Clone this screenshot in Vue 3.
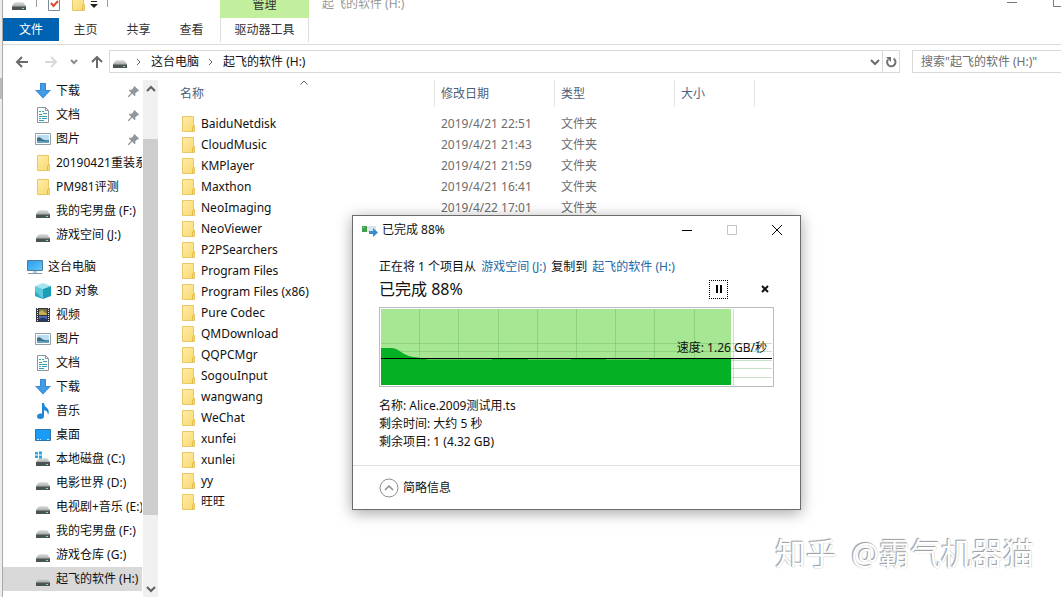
<script setup>
import { ref } from 'vue'

const quickAccess = [
  { icon: 'download', name: '下载', pinned: true },
  { icon: 'doc', name: '文档', pinned: true },
  { icon: 'picture', name: '图片', pinned: true },
  { icon: 'folder', name: '20190421重装系统' },
  { icon: 'folder', name: 'PM981评测' },
  { icon: 'drive', name: '我的宅男盘 (F:)' },
  { icon: 'drive', name: '游戏空间 (J:)' }
]
const thisPc = [
  { icon: 'cube', name: '3D 对象' },
  { icon: 'video', name: '视频' },
  { icon: 'picture', name: '图片' },
  { icon: 'doc', name: '文档' },
  { icon: 'download', name: '下载' },
  { icon: 'music', name: '音乐' },
  { icon: 'desktop', name: '桌面' },
  { icon: 'system', name: '本地磁盘 (C:)' },
  { icon: 'drive', name: '电影世界 (D:)' },
  { icon: 'drive', name: '电视剧+音乐 (E:)' },
  { icon: 'drive', name: '我的宅男盘 (F:)' },
  { icon: 'drive', name: '游戏仓库 (G:)' },
  { icon: 'drive', name: '起飞的软件 (H:)', current: true }
]
const files = [
  ['BaiduNetdisk', '2019/4/21 22:51'],
  ['CloudMusic', '2019/4/21 21:43'],
  ['KMPlayer', '2019/4/21 21:59'],
  ['Maxthon', '2019/4/21 16:41'],
  ['NeoImaging', '2019/4/22 17:01'],
  ['NeoViewer', ''],
  ['P2PSearchers', ''],
  ['Program Files', ''],
  ['Program Files (x86)', ''],
  ['Pure Codec', ''],
  ['QMDownload', ''],
  ['QQPCMgr', ''],
  ['SogouInput', ''],
  ['wangwang', ''],
  ['WeChat', ''],
  ['xunfei', ''],
  ['xunlei', ''],
  ['yy', ''],
  ['旺旺', '']
]
const query = ref('')
const gridX = [39, 78, 118, 157, 196, 235, 274, 314, 353]
const gridY = [35, 43, 52, 60, 69]
</script>

<template>
  <div class="desktop">
    <svg class="defs" aria-hidden="true">
      <defs>
        <linearGradient id="gFolder" x1="0" y1="0" x2="1" y2="1">
          <stop offset="0" stop-color="#ffedaa" /><stop offset="1" stop-color="#f8d86c" />
        </linearGradient>
        <linearGradient id="gScreen" x1="0" y1="0" x2="1" y2="1">
          <stop offset="0" stop-color="#2c9be8" /><stop offset="1" stop-color="#62c8fb" />
        </linearGradient>
        <linearGradient id="gTop" x1="0" y1="0" x2="0" y2="1">
          <stop offset="0" stop-color="#e4e4e4" /><stop offset="1" stop-color="#a9adac" />
        </linearGradient>
      </defs>
      <symbol id="i-download" viewBox="0 0 16 16">
        <path d="M5 0h6v7h5l-8 8.500L0 7h5z" fill="#3789d3" /><path d="M6 1h4v7h4l-6 6-6-6h4z" fill="#429be3" />
      </symbol>
      <symbol id="i-doc" viewBox="0 0 16 16">
        <path d="M2.500.5h8l3 3v12h-11z" fill="#fcfefe" stroke="#8b979b" /><path d="M10.500.5v3h3" fill="none" stroke="#8b979b" />
        <path d="M4 4.500h2M7 4.500h2M8 6.500h4M4 7.500h3M4 9.500h8M4 11.500h2M7 11.500h5M4 13.500h5" stroke="#36a0b4" />
      </symbol>
      <symbol id="i-picture" viewBox="0 0 16 16">
        <path d="M.5 2.500h15v11H.5z" fill="#fff" stroke="#929da5" /><path d="M2 4h12v8H2z" fill="#b9ddf3" />
        <path d="M2 7q3-2 5 1 3 2 7 1v3H2z" fill="#3c6f86" /><path d="M2 10q6 0 12 .5V12H2z" fill="#66a5c9" />
      </symbol>
      <symbol id="i-folder" viewBox="0 0 16 16">
        <path d="M2.500.5h11v9h1v6h-12z" fill="url(#gFolder)" stroke="#e9c767" /><path d="M12.500 15.500V11l2-1.500" fill="none" stroke="#e2bb50" />
      </symbol>
      <symbol id="i-drive" viewBox="0 0 16 16">
        <path d="M4 7h8l3 4H1z" fill="url(#gTop)" /><path d="M1 11h14v4H1z" fill="#4b5452" /><path d="M1 11h14v1H1z" fill="#7a8381" />
        <path d="M11 13h2v1h-2z" fill="#8fe08f" />
      </symbol>
      <symbol id="i-system" viewBox="0 0 16 16">
        <path d="M4 7h8l3 4H1z" fill="url(#gTop)" /><path d="M1 11h14v4H1z" fill="#4b5452" /><path d="M11 13h2v1h-2z" fill="#8fe08f" />
        <path d="M0 1h3v2.500H0zM4 .5h3v3H4zM0 4.500h3V7H0zM4 4.500h3v3H4z" fill="#24a5e4" />
      </symbol>
      <symbol id="i-pc" viewBox="0 0 16 16">
        <path d="M.5 1.500h15v10H.5z" fill="url(#gScreen)" stroke="#4a7fa5" /><path d="M6 12h4v2H6z" fill="#b8cbd8" /><path d="M1 14.500h14" stroke="#7d96a8" />
      </symbol>
      <symbol id="i-cube" viewBox="0 0 16 16">
        <path d="M0 3l8-3 8 3-8 3z" fill="#a5e6ee" /><path d="M0 3l8 3v10l-8-3z" fill="#5bcbdc" /><path d="M16 3L8 6v10l8-3z" fill="#1a9db7" />
        <path d="M0 13V8l8 8z" fill="#2fa9c4" />
      </symbol>
      <symbol id="i-video" viewBox="0 0 16 16">
        <path d="M1 1h14v14H1z" fill="#34383c" /><path d="M4 2h8v6H4z" fill="#777154" /><path d="M4 9h8v5H4z" fill="#566bb3" />
        <path d="M4 5l3-2 5 4v1H4z" fill="#c8ad4b" /><path d="M4 12q4-3 8 0v2H4z" fill="#263a70" />
        <path d="M2.500 1v14M13.500 1v14" stroke="#e4e4e4" stroke-dasharray="1 1" />
      </symbol>
      <symbol id="i-music" viewBox="0 0 16 16">
        <path d="M7 0h2q0 3 3 5 3 3 1 7 0-4-4-5v6q0 3-3.500 3T2 13.500 5 10.500h2z" fill="#1d88d8" />
      </symbol>
      <symbol id="i-desktop" viewBox="0 0 16 16">
        <path d="M.5 2.500h15v11H.5z" fill="#1a9bf5" stroke="#2777ac" /><path d="M2 12.500h2M5 12.500h1M12 12.500h2" stroke="#c9ebff" />
      </symbol>
      <symbol id="i-pin" viewBox="0 0 12 12">
        <path d="M7 0l5 5-1 1-1 0-2 2 0 3-1 0-2.500-2.500L1 12 0 12 0 11l3.500-3.500L1 5 1 4l3 0 2-2V1z" fill="#8f979c" />
      </symbol>
    </svg>

    <div class="behind"><span></span></div>

    <main class="explorer">
      <header class="titlebar">
        <div class="quickbar">
          <svg class="i16" aria-hidden="true"><use href="#i-drive" /></svg>
          <span class="vline"></span>
          <svg class="i16 props" viewBox="0 0 16 16" aria-hidden="true"><path d="M2.500.5h11v15h-11z" fill="#fff" stroke="#7d8b98" /><path d="M5 8l2.500 3L12 6" fill="none" stroke="#da4a36" stroke-width="2" /></svg>
          <svg class="i16" aria-hidden="true"><use href="#i-folder" /></svg>
          <svg class="more" viewBox="0 0 8 8" aria-hidden="true"><path d="M1 1.500h6" stroke="#222" /><path d="M0 4h8L4 8z" fill="#222" /></svg>
          <span class="vline"></span>
        </div>
        <div class="context">管理</div>
        <h1>起飞的软件 (H:)</h1>
        <svg class="winctl" viewBox="0 0 60 18" aria-hidden="true"><path d="M6 2.500h10M52.500 0v6.500H60" fill="none" stroke="#777" /></svg>
      </header>

      <nav class="tabs" aria-label="功能区">
        <button class="tab file">文件</button>
        <button class="tab">主页</button>
        <button class="tab">共享</button>
        <button class="tab">查看</button>
        <button class="tab tools">驱动器工具</button>
      </nav>

      <div class="addressrow">
        <div class="history">
          <button aria-label="后退"><svg viewBox="0 0 14 12"><path d="M13 6H2M7 1L2 6l5 5" fill="none" stroke="#6a6a6a" stroke-width="2" /></svg></button>
          <button aria-label="前进"><svg viewBox="0 0 14 12"><path d="M1 6h11M7 1l5 5-5 5" fill="none" stroke="#d9d9d9" stroke-width="2" /></svg></button>
          <button class="recent" aria-label="最近浏览的位置"><svg viewBox="0 0 8 12"><path d="M1 4l3 3 3-3" fill="none" stroke="#8a8a8a" stroke-width="2" /></svg></button>
          <button aria-label="向上"><svg viewBox="0 0 14 12"><path d="M7 12V1M2 6l5-5 5 5" fill="none" stroke="#6a6a6a" stroke-width="2" /></svg></button>
        </div>
        <div class="address">
          <svg class="i16" aria-hidden="true"><use href="#i-drive" /></svg>
          <svg class="sep" viewBox="0 0 6 8" aria-hidden="true"><path d="M1 1l3 3-3 3" fill="none" stroke="#666" /></svg>
          <a href="#">这台电脑</a>
          <svg class="sep" viewBox="0 0 6 8" aria-hidden="true"><path d="M1 1l3 3-3 3" fill="none" stroke="#666" /></svg>
          <a href="#">起飞的软件 (H:)</a>
          <button class="drop" aria-label="展开"><svg viewBox="0 0 10 8"><path d="M1 2l4 4 4-4" fill="none" stroke="#6a6a6a" stroke-width="2" /></svg></button>
          <button class="refresh" aria-label="刷新"><svg viewBox="0 0 12 12"><path d="M8.500 2.500A4.200 4.200 0 1 1 3 3.500" fill="none" stroke="#707070" stroke-width="2" /><path d="M1 1h5v5L4.500 4.500 3 3z" fill="#707070" /></svg></button>
        </div>
        <input v-model="query" class="search" type="text" aria-label="搜索" placeholder='搜索"起飞的软件 (H:)"'>
      </div>

      <div class="content">
        <nav class="tree" aria-label="导航窗格">
          <a v-for="n in quickAccess" :key="n.name" href="#" class="node">
            <svg class="i16" aria-hidden="true"><use :href="'#i-' + n.icon" /></svg>
            <span>{{ n.name }}</span>
            <svg v-if="n.pinned" class="pin" aria-hidden="true"><use href="#i-pin" /></svg>
          </a>
          <a href="#" class="node root">
            <svg class="i16" aria-hidden="true"><use href="#i-pc" /></svg><span>这台电脑</span>
          </a>
          <a v-for="n in thisPc" :key="n.name" href="#" class="node" :class="{ current: n.current }">
            <svg class="i16" aria-hidden="true"><use :href="'#i-' + n.icon" /></svg>
            <span>{{ n.name }}</span>
          </a>
        </nav>
        <div class="scroll" aria-hidden="true">
          <svg viewBox="0 0 10 8"><path d="M1 6l4-4 4 4" fill="none" stroke="#606060" stroke-width="2" /></svg>
          <div class="track"><div class="thumb"></div></div>
          <svg viewBox="0 0 10 8"><path d="M1 2l4 4 4-4" fill="none" stroke="#606060" stroke-width="2" /></svg>
        </div>
        <section class="listing">
          <table>
            <colgroup><col class="c-name"><col class="c-date"><col class="c-type"><col class="c-size"></colgroup>
            <thead>
              <tr>
                <th scope="col">名称<svg class="sort" viewBox="0 0 8 5" aria-hidden="true"><path d="M.5 4.500L4 1l3.500 3.500" fill="none" stroke="#666" /></svg></th>
                <th scope="col">修改日期</th><th scope="col">类型</th><th scope="col">大小</th>
              </tr>
            </thead>
            <tbody>
              <tr v-for="f in files" :key="f[0]">
                <td><div class="fname"><svg class="i16" aria-hidden="true"><use href="#i-folder" /></svg>{{ f[0] }}</div></td>
                <td>{{ f[1] }}</td><td>{{ f[1] ? '文件夹' : '' }}</td><td></td>
              </tr>
            </tbody>
          </table>
        </section>
      </div>
    </main>

    <section class="dialog" role="dialog" aria-labelledby="dlg-title">
      <header class="dlg-bar">
        <svg class="i16" viewBox="0 0 16 16" aria-hidden="true">
          <path d="M0 4h14v6H0z" fill="#d9e6ea" /><path d="M0 4h5v6H0z" fill="#42a148" /><path d="M1 5h1v1H1z" fill="#b6edb2" />
          <path d="M7 9h4V6l5 4.500-5 4.500v-3H7z" fill="#3c8bcc" />
        </svg>
        <span id="dlg-title">已完成 88%</span>
        <button aria-label="最小化"><svg viewBox="0 0 10 10"><path d="M0 5.500h10" stroke="#000" /></svg></button>
        <button aria-label="最大化" disabled><svg viewBox="0 0 10 10"><path d="M.5.5h9v9h-9z" fill="none" stroke="#c4c4c4" /></svg></button>
        <button aria-label="关闭"><svg viewBox="0 0 10 10"><path d="M0 0l10 10M10 0L0 10" stroke="#000" /></svg></button>
      </header>
      <div class="dlg-body">
        <p class="route">正在将 1 个项目从 <a href="#">游戏空间 (J:)</a> 复制到 <a href="#">起飞的软件 (H:)</a></p>
        <div class="status">
          <h2>已完成 88%</h2>
          <button class="pause" aria-label="暂停"><svg viewBox="0 0 8 8"><path d="M1 0h2v8H1zM5 0h2v8H5z" /></svg></button>
          <button class="cancel" aria-label="取消"><svg viewBox="0 0 8 8"><path d="M1 1l6 6M7 1L1 7" stroke="#111" stroke-width="2" /></svg></button>
        </div>
        <div class="chart">
          <svg viewBox="0 0 391 76" preserveAspectRatio="none" aria-hidden="true">
            <path d="M0 0h350v76H0z" fill="#a7e793" />
            <g stroke="#5fae58" stroke-opacity=".35">
              <path v-for="x in gridX" :key="'x' + x" :d="`M${x - 0.5} 0v76`" />
              <path v-for="y in gridY" :key="'y' + y" :d="`M0 ${y - 0.5}h391`" />
            </g>
            <path d="M0 39h10q5 0 10 4 7 5 17 5.500l10 2h64v-1h36v1h43v-1h35v1h43v-1h82V76H0z" fill="#06b025" />
            <path d="M0 49.500h391" stroke="#000" />
          </svg>
          <span class="speed">速度: 1.26 GB/秒</span>
        </div>
        <p>名称: Alice.2009测试用.ts</p>
        <p>剩余时间: 大约 5 秒</p>
        <p>剩余项目: 1 (4.32 GB)</p>
      </div>
      <footer>
        <button class="less">
          <svg viewBox="0 0 20 20" aria-hidden="true"><circle cx="10" cy="10" r="9" fill="#fff" stroke="#8e8e8e" /><path d="M6 12l4-4 4 4" fill="none" stroke="#8a8a8a" stroke-width="1.500" /></svg>
          简略信息
        </button>
      </footer>
    </section>

    <div class="watermark"><span>知乎</span><span>@霸气机器猫</span></div>
  </div>
</template>

<style>
body { overflow: hidden; background: #fff; }
</style>

<style scoped>
.desktop {
  position: relative; display: flex; height: 100vh; overflow: hidden;
  font-family: "Noto Sans", "Noto Sans CJK SC", sans-serif; font-size: 12px; line-height: 18px; color: #111;
}
.defs { position: absolute; width: 0; height: 0; }
button { margin: 0; padding: 0; border: 0; background: none; font: inherit; color: inherit; display: flex; align-items: center; justify-content: center; }
a { color: inherit; text-decoration: none; }
h1, h2, p { margin: 0; font-weight: 400; }
svg { display: block; flex: none; }
.i16 { width: 16px; height: 16px; }

.behind { width: 2px; background: #ededed; border-right: 1px solid #a9a9a9; padding-top: 78px; }
.behind span { display: block; height: 21px; background: #bbb; }
.explorer { flex: 1; min-width: 0; display: flex; flex-direction: column; }

.titlebar { display: flex; height: 18px; }
.quickbar { display: flex; width: 217px; align-items: flex-start; gap: 8px; padding-left: 8px; box-sizing: border-box; }
.quickbar .i16 { margin-top: -5px; }
.quickbar .vline { width: 1px; height: 7px; background: #999; margin: 0 1px; }
.more { width: 8px; height: 8px; margin-left: -4px; }
.context { width: 89px; background: #c1ef9d; text-align: center; line-height: 9px; color: #333; }
.titlebar h1 { flex: 1; margin-left: 13px; font-size: 12px; line-height: 7px; color: #999; }
.winctl { width: 60px; height: 18px; }

.tabs { display: flex; height: 26px; border-bottom: 1px solid #d9dadb; }
.tab { width: 53px; height: 24px; color: #333; }
.tab.file { width: 56px; height: 23px; background: #0063b1; color: #fff; }
.tab.tools { width: 89px; margin-left: 2px; box-sizing: border-box; border: solid #dedede; border-width: 0 1px; }

.addressrow { display: flex; height: 23px; padding: 5px 0 6px; }
.history { display: flex; width: 106px; align-items: center; padding-left: 12px; gap: 15px; box-sizing: border-box; }
.history svg { width: 14px; height: 12px; }
.history .recent { margin: 0 -3px; }
.history .recent svg { width: 8px; }
.address { flex: 1; display: flex; align-items: center; border: 1px solid #d9d9d9; box-sizing: border-box; padding-left: 2px; }
.address .sep { width: 6px; height: 8px; margin: 0 8px; }
.address a { white-space: nowrap; margin: 0 1px; }
.address > .i16 { margin-top: -2px; }
.drop { margin-left: auto; width: 14px; height: 21px; }
.drop svg { width: 10px; height: 8px; }
.refresh { width: 17px; height: 21px; border-left: 1px solid #d9d9d9; }
.refresh svg { width: 12px; height: 12px; }
.search { width: 149px; margin-left: 12px; padding: 0 8px; box-sizing: border-box; border: 1px solid #d9d9d9; border-right: 0; font: inherit; color: #333; outline: 0; }
.search::placeholder { color: #6d6d6d; opacity: 1; }

.content { flex: 1; min-height: 0; display: flex; padding-top: 1px; }
.tree { width: 140px; overflow: hidden; }
.node { display: flex; align-items: center; height: 24px; margin-right: 1px; padding-left: 32px; gap: 5px; overflow: hidden; white-space: nowrap; }
.tree { margin-top: -1px; }
.node.root { margin-top: 8px; padding-left: 24px; }
.node.current { background: #d9d9d9; }
.node .pin { width: 11px; height: 11px; margin: 0 3px 0 auto; }
.scroll { width: 15px; background: #f0f0f0; display: flex; flex-direction: column; align-items: center; padding: 5px 0 4px; }
.scroll svg { width: 10px; height: 8px; }
.track { flex: 1; width: 100%; padding: 46px 0 70px; box-sizing: border-box; }
.thumb { height: 100%; background: #cdcdcd; }
.listing { flex: 1; padding-left: 14px; }
table { border-collapse: separate; border-spacing: 0; table-layout: fixed; width: 583px; }
.c-name { width: 263px; }
.c-date, .c-type { width: 120px; }
.c-size { width: 80px; }
th { position: relative; height: 27px; padding: 0 0 0 6px; font-weight: 400; text-align: left; color: #4c607a; border-right: 1px solid #e5e5e5; }
th:first-child { padding-left: 8px; }
.sort { position: absolute; left: 128px; top: 0; width: 8px; height: 5px; }
thead::after { content: ""; display: block; height: 6px; }
td { height: 21px; padding: 0 0 0 6px; color: #6d6d6d; white-space: nowrap; }
.fname { display: flex; align-items: center; gap: 5px; padding-left: 2px; color: #111; }

.dialog { position: absolute; left: 352px; top: 215px; width: 447px; background: #fff; border: 1px solid #6b6b6b; box-shadow: 0 3px 14px rgba(0, 0, 0, .36); }
.dlg-bar { display: flex; align-items: center; height: 28px; padding: 0 1px 1px 9px; }
.dlg-bar span { flex: 1; margin-left: 4px; }
.dlg-bar button { width: 45px; height: 28px; }
.dlg-bar svg:not(.i16) { width: 10px; height: 10px; }
.dlg-body { padding: 13px 26px 14px; }
.dlg-body a { color: #2168a8; margin: 0 2px; }
.status { display: flex; align-items: center; height: 26px; }
.status h2 { flex: 1; font-size: 16px; line-height: 26px; }
.status svg { width: 8px; height: 8px; }
.pause { width: 19px; height: 19px; border: 1px dotted #000; box-sizing: border-box; }
.cancel { width: 18px; height: 19px; margin-left: 28px; }
.chart { position: relative; height: 80px; margin: 5px 0 10px; padding: 1px; box-sizing: border-box; border: 1px solid #bcbcbc; }
.chart svg { width: 100%; height: 100%; }
.speed { position: absolute; right: 6px; top: 31px; }
footer { border-top: 1px solid #dfdfdf; padding: 11px 26px; }
.less { gap: 4px; height: 21px; }
.less svg { width: 20px; height: 20px; }

.watermark { position: absolute; right: 27px; bottom: 22px; display: flex; gap: 14px; font-size: 31px; line-height: 44px; color: #fff; text-shadow: -1px -1px 1px #999, 0 0 1px #aaa; white-space: nowrap; }
</style>
